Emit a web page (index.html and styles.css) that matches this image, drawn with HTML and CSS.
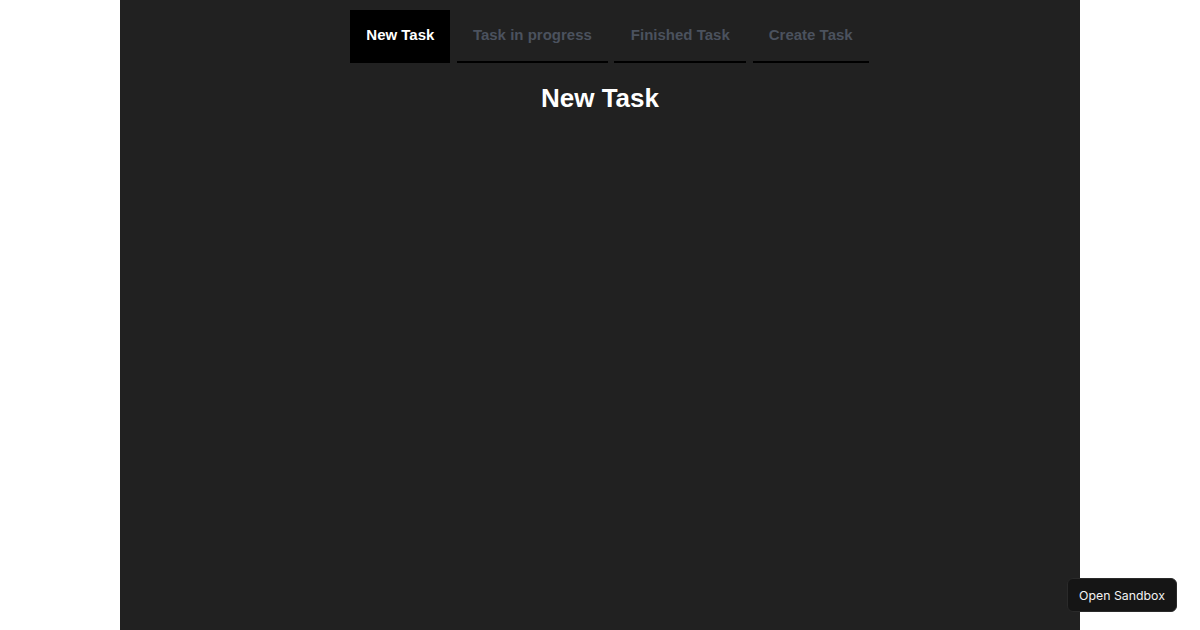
FILE: index.html
```html
<!DOCTYPE html>
<html>
<head>
<meta charset="utf-8">
<link rel="stylesheet" href="styles.css">
</head>
<body>
<div class="app">
  <nav class="tabs">
    <div class="tab active">New Task</div>
    <div class="tab">Task in progress</div>
    <div class="tab">Finished Task</div>
    <div class="tab">Create Task</div>
  </nav>
  <h1 class="title">New Task</h1>
</div>
<div class="sandbox">Open Sandbox</div>
</body>
</html>
```
FILE: styles.css
```css
html, body { margin: 0; padding: 0; height: 100%; background: #ffffff; }
body { font-family: "Liberation Sans", Arial, sans-serif; }
.app {
  width: 960px;
  margin: 0 auto;
  min-height: 630px;
  background: #212121;
  padding-top: 10px;
  box-sizing: border-box;
}
.tabs {
  display: flex;
  justify-content: center;
  padding-left: 19px;
}
.tab {
  height: 53px;
  box-sizing: border-box;
  padding: 16px 16px 0 16px;
  font-size: 15px;
  font-weight: bold;
  color: #4b525e;
  border-bottom: 2px solid #000;
  margin-right: 6.5px;
  line-height: 18px;
}
.tab:last-child { margin-right: 0; }
.tab:nth-child(3) { padding-left: 16.5px; padding-right: 16.5px; }
.tab.active {
  background: #000;
  color: #fff;
}
.title {
  margin: 20px 0 0 0;
  text-align: center;
  color: #fff;
  font-size: 26px;
  font-weight: bold;
  line-height: 30px;
}
.sandbox {
  position: fixed;
  right: 23px;
  bottom: 18px;
  width: 110px;
  height: 34px;
  box-sizing: border-box;
  background: #151515;
  border: 1px solid #2a2a2a;
  border-radius: 6px;
  color: #f2f2f2;
  font-family: Inter, "Liberation Sans", sans-serif;
  font-size: 12.3px;
  display: flex;
  align-items: center;
  justify-content: center;
}
```
